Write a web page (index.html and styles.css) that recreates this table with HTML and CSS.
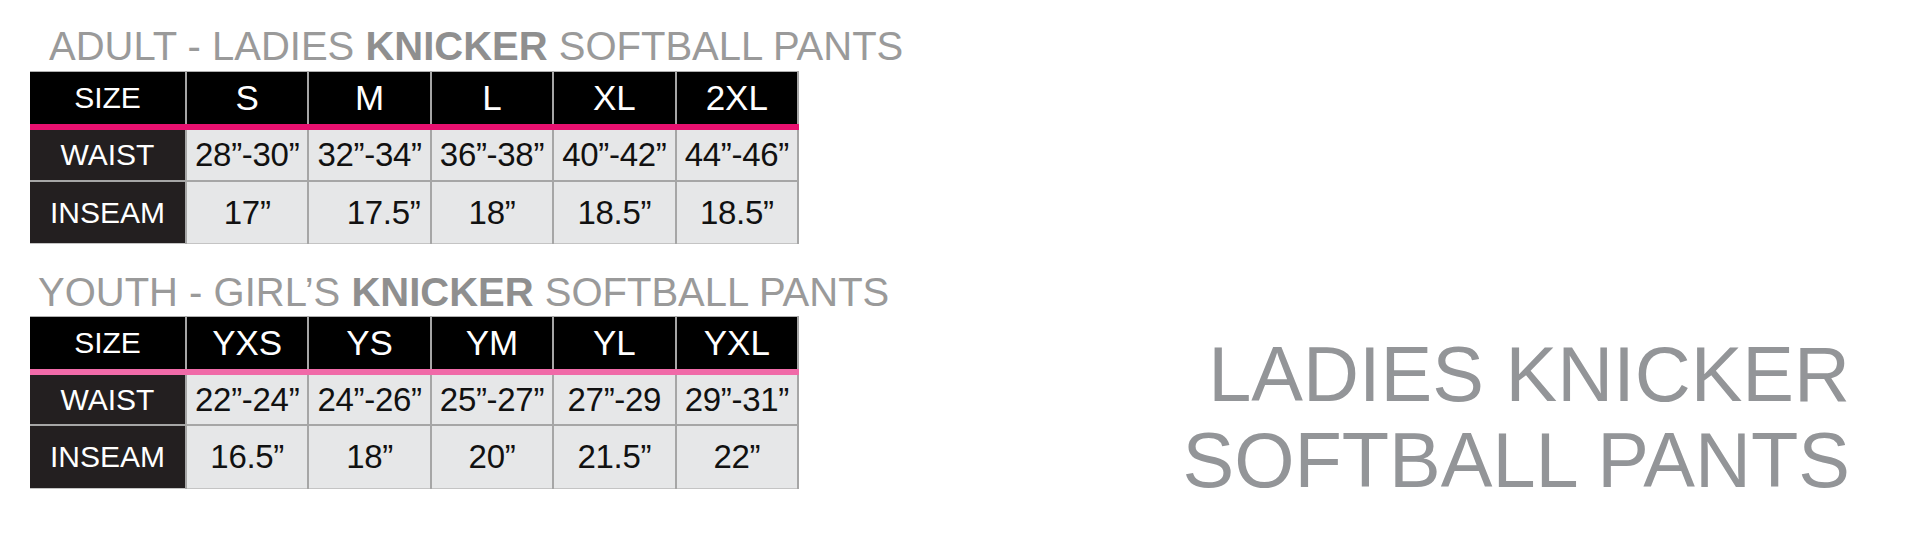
FILE: index.html
```html
<!DOCTYPE html>
<html lang="en">
<head>
<meta charset="utf-8">
<title>Ladies Knicker Softball Pants Size Chart</title>
<link rel="stylesheet" href="styles.css">
</head>
<body>
<div class="page">
  <div class="charts">
    <section class="chart chart-adult">
      <h2 class="chart-title">ADULT - LADIES <b>KNICKER</b> SOFTBALL PANTS</h2>
      <table class="size-table">
        <tr class="row-head">
          <th class="label">SIZE</th><th>S</th><th>M</th><th>L</th><th>XL</th><th>2XL</th>
        </tr>
        <tr class="row-waist">
          <th class="label">WAIST</th><td>28”-30”</td><td>32”-34”</td><td>36”-38”</td><td>40”-42”</td><td>44”-46”</td>
        </tr>
        <tr class="row-inseam">
          <th class="label">INSEAM</th><td>17”</td><td class="shift">17.5”</td><td>18”</td><td>18.5”</td><td>18.5”</td>
        </tr>
      </table>
    </section>
    <section class="chart chart-youth">
      <h2 class="chart-title">YOUTH - GIRL’S <b>KNICKER</b> SOFTBALL PANTS</h2>
      <table class="size-table">
        <tr class="row-head">
          <th class="label">SIZE</th><th>YXS</th><th>YS</th><th>YM</th><th>YL</th><th>YXL</th>
        </tr>
        <tr class="row-waist">
          <th class="label">WAIST</th><td>22”-24”</td><td>24”-26”</td><td>25”-27”</td><td>27”-29</td><td>29”-31”</td>
        </tr>
        <tr class="row-inseam">
          <th class="label">INSEAM</th><td>16.5”</td><td>18”</td><td>20”</td><td>21.5”</td><td>22”</td>
        </tr>
      </table>
    </section>
  </div>
  <div class="product-name">
    <div>LADIES KNICKER</div>
    <div>SOFTBALL PANTS</div>
  </div>
</div>
</body>
</html>
```

FILE: styles.css
```css
html, body {
  margin: 0;
  padding: 0;
  background: #ffffff;
}

body {
  font-family: "Liberation Sans", Arial, sans-serif;
  width: 1920px;
  height: 548px;
  overflow: hidden;
}

.page {
  display: flex;
  justify-content: space-between;
  align-items: flex-end;
  height: 548px;
  box-sizing: border-box;
}

.charts {
  align-self: flex-start;
  padding: 24px 0 0 30px;
  display: flex;
  flex-direction: column;
  gap: 26px;
}

.chart {
  display: flex;
  flex-direction: column;
  gap: 3px;
}

.chart-youth {
  gap: 2px;
}

.chart-title {
  margin: 0;
  font-size: 40px;
  line-height: 44px;
  font-weight: normal;
  color: #9a9a9a;
  white-space: nowrap;
}

.chart-adult .chart-title {
  padding-left: 19px;
}

.chart-youth .chart-title {
  padding-left: 8px;
}

.chart-title b {
  font-weight: bold;
  color: #8f8f8f;
}

.size-table {
  border-collapse: collapse;
  width: 769px;
  table-layout: fixed;
  border-top: 1px solid #b0b0b0;
  border-right: 2px solid #a6a6a6;
}

.size-table th,
.size-table td {
  padding: 0;
  text-align: center;
  font-weight: normal;
  border-left: 2px solid #a6a6a6;
  white-space: nowrap;
}

.size-table .label {
  width: 155px;
  background: #231f20;
  color: #ffffff;
  font-size: 30px;
  border-left: none;
}

.row-head th {
  background: #000000;
  color: #ffffff;
  font-size: 35px;
  height: 52px;
  border-bottom: 6px solid #e8106f;
}

.row-head th.label {
  background: #000000;
  font-size: 30px;
}

.chart-youth .row-head th {
  border-bottom-color: #f06aa8;
}

.size-table td {
  background: #e6e7e8;
  color: #111111;
  font-size: 33px;
  letter-spacing: -0.3px;
}

.row-waist th,
.row-waist td {
  height: 50px;
  border-bottom: 2px solid #a6a6a6;
}

.chart-youth .row-waist th,
.chart-youth .row-waist td {
  height: 49px;
}

.row-inseam th,
.row-inseam td {
  height: 61px;
  border-bottom: 1px solid #c4c4c4;
}

.chart-youth .row-inseam th,
.chart-youth .row-inseam td {
  height: 62px;
}

.size-table td.shift {
  padding-left: 28px;
}

.product-name {
  padding: 0 70px 45px 0;
  text-align: right;
  font-size: 77.5px;
  line-height: 86px;
  color: #939598;
  white-space: nowrap;
}
```
